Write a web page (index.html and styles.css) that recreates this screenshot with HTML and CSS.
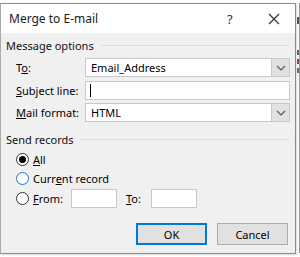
FILE: index.html
```html
<!DOCTYPE html>
<html>
<head>
<meta charset="utf-8">
<link rel="stylesheet" href="styles.css">
</head>
<body>
<div class="desk">
  <div class="dialog">
    <div class="titlebar">
      <span class="title">Merge to E-mail</span>
      <span class="help">?</span>
      <span class="close">
        <svg width="12" height="12" viewBox="0 0 12 12"><path d="M1 1 L11 11 M11 1 L1 11" stroke="#333" stroke-width="1.2" fill="none"/></svg>
      </span>
    </div>
    <div class="body">
      <div class="group-title"><span>Message options</span><span class="rule"></span></div>
      <div class="row r1">
        <label class="lbl">T<u>o</u>:</label>
        <div class="combo"><span class="val">Email_Address</span><span class="drop"><svg width="10" height="6" viewBox="0 0 10 6"><path d="M1 1 L5 5 L9 1" stroke="#555" stroke-width="1.1" fill="none"/></svg></span></div>
      </div>
      <div class="row r2">
        <label class="lbl"><u>S</u>ubject line:</label>
        <div class="text"><span class="caret"></span></div>
      </div>
      <div class="row r3">
        <label class="lbl"><u>M</u>ail format:</label>
        <div class="combo"><span class="val">HTML</span><span class="drop"><svg width="10" height="6" viewBox="0 0 10 6"><path d="M1 1 L5 5 L9 1" stroke="#555" stroke-width="1.1" fill="none"/></svg></span></div>
      </div>
      <div class="group-title second"><span>Send records</span><span class="rule"></span></div>
      <div class="radio-row all"><span class="radio checked"></span><span><u>A</u>ll</span></div>
      <div class="radio-row cur"><span class="radio focus"></span><span>Curr<u>e</u>nt record</span></div>
      <div class="radio-row from">
        <span class="radio"></span><span class="from-lbl"><u>F</u>rom:</span>
        <div class="small-box"></div>
        <span class="to-lbl"><u>T</u>o:</span>
        <div class="small-box"></div>
      </div>
      <div class="buttons">
        <div class="btn default">OK</div>
        <div class="btn">Cancel</div>
      </div>
    </div>
  </div>
  <div class="side">
    <i class="m1"></i><i class="m2"></i><i class="m3"></i><i class="m4"></i>
  </div>
</div>
</body>
</html>
```
FILE: styles.css
```css
* { box-sizing: border-box; }
html, body { margin: 0; padding: 0; }
body {
  width: 300px; height: 257px; overflow: hidden;
  background: #fff;
  font-family: "Noto Sans", "Open Sans", sans-serif;
  font-size: 11px; color: #000;
}
.desk { display: flex; padding-top: 3px; }
.dialog {
  width: 296px; height: 251px; flex-shrink: 0;
  border: 1px solid #8a8a8a;
  border-left: 1px solid #aaa;
  background: #f0f0f0;
  display: flex; flex-direction: column;
  box-shadow: 1px 1px 2px rgba(0,0,0,0.15);
}
.titlebar {
  height: 29px; flex-shrink: 0; background: #fff;
  display: flex; align-items: center;
  padding-left: 8px;
}
.title { font-size: 12px; color: #1a1a1a; flex: 1; white-space: nowrap; }
.help { width: 10px; margin-right: 31px; color: #333; font-size: 13px; }
.close { width: 12px; margin-right: 15px; display: flex; }
.body { padding: 5px 5px 0 5px; flex: 1; display: flex; flex-direction: column; }
.group-title { display: flex; align-items: center; height: 14px; color: #111; white-space: nowrap; flex-shrink: 0; }
.group-title .rule { flex: 1; height: 1px; background: #dcdcdc; margin-left: 7px; margin-right: 1px; }
.group-title.second { margin-top: 10px; }
.row { display: flex; align-items: center; padding-left: 10px; flex-shrink: 0; }
.r1 { margin-top: 6px; }
.r2 { margin-top: 4px; }
.r3 { margin-top: 3px; }
.lbl { width: 69px; white-space: nowrap; }
u { text-decoration: underline; text-underline-offset: 1px; }
.combo, .text {
  width: 205px; height: 19px; background: #fff;
  border: 1px solid #c8c8c8;
  display: flex; align-items: center; flex-shrink: 0;
}
.combo .val { flex: 1; padding-left: 5px; }
.drop {
  width: 18px; height: 17px; background: #e1e1e1;
  border-left: 1px solid #c8c8c8;
  display: flex; align-items: center; justify-content: center;
}
.caret { width: 1px; height: 13px; background: #000; margin-left: 4px; }
.radio-row { display: flex; align-items: center; padding-left: 10px; height: 19px; white-space: nowrap; flex-shrink: 0; }
.radio-row.all { margin-top: 4px; }
.radio-row.from { margin-top: 1px; }
.radio {
  width: 13px; height: 13px; border-radius: 50%;
  border: 1px solid #333; background: #fff; margin-right: 4px;
  display: flex; align-items: center; justify-content: center;
}
.radio.checked::after { content: ""; width: 7px; height: 7px; border-radius: 50%; background: #000; }
.radio.focus { border-color: #1a73c9; }
.from-lbl { width: 38px; }
.small-box { width: 46px; height: 19px; background: #fff; border: 1px solid #c8c8c8; }
.to-lbl { margin-left: 9px; width: 25px; }
.buttons { display: flex; justify-content: flex-end; gap: 10px; margin-top: 15px; margin-right: 2px; flex-shrink: 0; }
.btn {
  width: 71px; height: 22px; background: #e1e1e1;
  border: 1px solid #adadad;
  display: flex; align-items: center; justify-content: center;
}
.btn.default { border: 2px solid #0078d7; }
.side { flex: 1; display: flex; flex-direction: column; padding-top: 14px; border-right: 1px solid #999; height: 250px; }
.side i { display: block; width: 2px; background: #555; margin-left: 1px; }
.side .m1 { height: 7px; }
.side .m2 { height: 5px; margin-top: 26px; background: #666; }
.side .m3 { height: 5px; margin-top: 4px; background: #a33; }
.side .m4 { height: 5px; margin-top: 4px; background: #666; }
```
